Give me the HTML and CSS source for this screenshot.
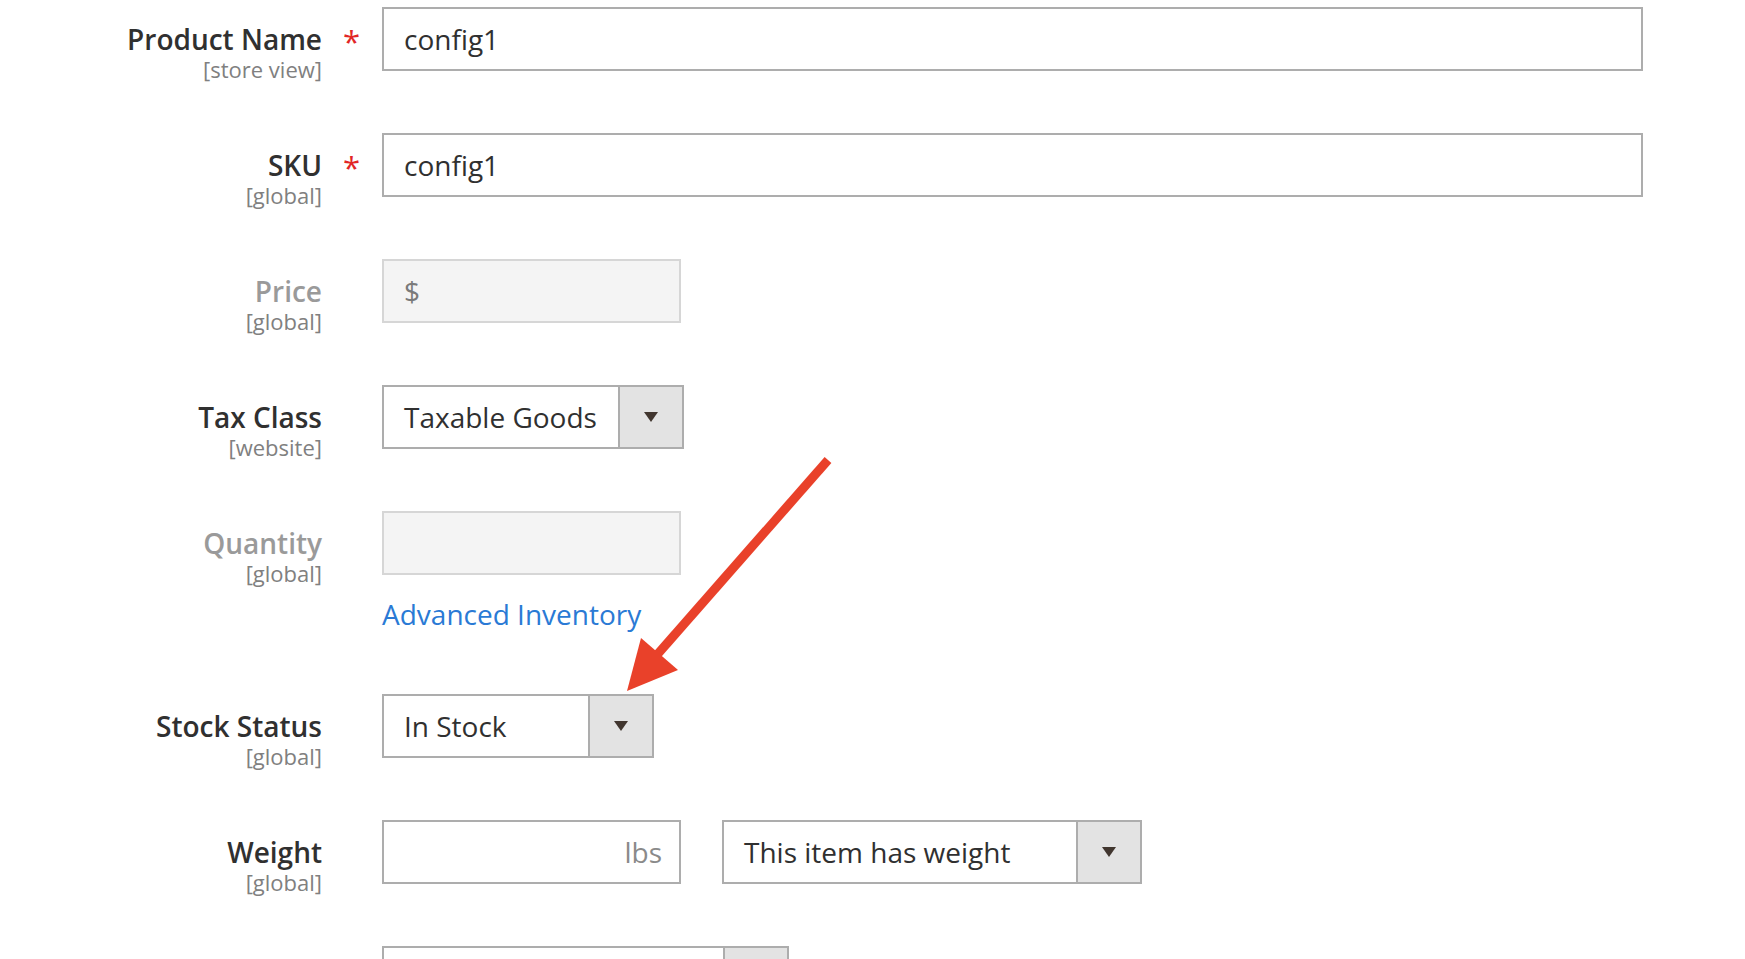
FILE: index.html
```html
<!DOCTYPE html>
<html lang="en">
<head>
    <meta charset="UTF-8">
    <title>New Product - General</title>
    <link rel="stylesheet" href="styles.css">
</head>
<body>
    <div class="page">
        <div class="form">
            <div class="field">
                <div class="field-label">
                    <span class="label-text">Product Name</span>
                    <span class="scope">[store view]</span>
                </div>
                <div class="field-req">*</div>
                <div class="field-control">
                    <div class="input">config1</div>
                </div>
            </div>

            <div class="field">
                <div class="field-label">
                    <span class="label-text">SKU</span>
                    <span class="scope">[global]</span>
                </div>
                <div class="field-req">*</div>
                <div class="field-control">
                    <div class="input">config1</div>
                </div>
            </div>

            <div class="field disabled">
                <div class="field-label">
                    <span class="label-text">Price</span>
                    <span class="scope">[global]</span>
                </div>
                <div class="field-req"></div>
                <div class="field-control">
                    <div class="input input-short">$</div>
                </div>
            </div>

            <div class="field">
                <div class="field-label">
                    <span class="label-text">Tax Class</span>
                    <span class="scope">[website]</span>
                </div>
                <div class="field-req"></div>
                <div class="field-control">
                    <div class="select select-tax">
                        <span class="select-value">Taxable Goods</span>
                        <span class="select-btn"><span class="caret"></span></span>
                    </div>
                </div>
            </div>

            <div class="field disabled">
                <div class="field-label">
                    <span class="label-text">Quantity</span>
                    <span class="scope">[global]</span>
                </div>
                <div class="field-req"></div>
                <div class="field-control">
                    <div class="input input-short"></div>
                    <a class="action-link" href="#">Advanced Inventory</a>
                </div>
            </div>

            <div class="field">
                <div class="field-label">
                    <span class="label-text">Stock Status</span>
                    <span class="scope">[global]</span>
                </div>
                <div class="field-req"></div>
                <div class="field-control">
                    <div class="select select-stock">
                        <span class="select-value">In Stock</span>
                        <span class="select-btn"><span class="caret"></span></span>
                    </div>
                </div>
            </div>

            <div class="field">
                <div class="field-label">
                    <span class="label-text">Weight</span>
                    <span class="scope">[global]</span>
                </div>
                <div class="field-req"></div>
                <div class="field-control row">
                    <div class="input input-short addon">lbs</div>
                    <div class="select select-weight">
                        <span class="select-value">This item has weight</span>
                        <span class="select-btn"><span class="caret"></span></span>
                    </div>
                </div>
            </div>

            <!-- next row starts at the fold -->
            <div class="field">
                <div class="field-label"></div>
                <div class="field-req"></div>
                <div class="field-control">
                    <div class="select select-visibility">
                        <span class="select-value"></span>
                        <span class="select-btn"><span class="caret"></span></span>
                    </div>
                </div>
            </div>
        </div>

        <!-- callout pointing at the stock status dropdown -->
        <svg class="callout" width="1745" height="959" viewBox="0 0 1745 959">
            <line x1="828" y1="460" x2="656" y2="656" stroke="#e9412a" stroke-width="9"/>
            <polygon points="627,691 641,638 678,670" fill="#e9412a"/>
        </svg>
    </div>
</body>
</html>
```

FILE: styles.css
```css
body {
    margin: 0;
    background: #ffffff;
    font-family: "Open Sans", "Liberation Sans", sans-serif;
    color: #303030;
}
.page {
    position: relative;
    height: 959px;
    overflow: hidden;
}
.form {
    padding: 7px 102px 0 0;
}
.field {
    display: flex;
    margin-bottom: 62px;
}
/* the scope note hangs below the label, so the row height follows the control */
.field-label {
    box-sizing: border-box;
    width: 322px;
    height: 64px;
    text-align: right;
    padding-top: 14px;
    white-space: nowrap;
}
.label-text {
    display: block;
    font-size: 28px;
    font-weight: 600;
    line-height: 36px;
}
.scope {
    display: block;
    font-size: 22px;
    line-height: 24px;
    color: #808080;
}
.field-req {
    width: 39px;
    padding: 16px 0 0 21px;
    font-size: 31px;
    font-weight: 500;
    line-height: 36px;
    color: #e22626;
}
.field-control {
    flex: 1;
}
.field-control.row {
    display: flex;
    gap: 41px;
}
.input {
    box-sizing: border-box;
    height: 64px;
    padding: 12px 20px;
    border: 2px solid #adadad;
    font-size: 28px;
    line-height: 36px;
    background: #ffffff;
}
.input-short {
    width: 299px;
}
.input.addon {
    text-align: right;
    padding-right: 17px;
    color: #8a8a8a;
}
.disabled .label-text {
    color: #9a9a9a;
}
.disabled .input {
    background: #f4f4f4;
    border-color: #d6d6d6;
    color: #7a7a7a;
}
.action-link {
    display: inline-block;
    margin-top: 21px;
    font-size: 28px;
    line-height: 36px;
    color: #2a7ad5;
    text-decoration: none;
}
.select {
    box-sizing: border-box;
    display: flex;
    height: 64px;
    border: 2px solid #adadad;
    background: #ffffff;
}
.select-value {
    flex: 1;
    padding: 12px 20px;
    font-size: 28px;
    line-height: 36px;
    white-space: nowrap;
}
.select-btn {
    box-sizing: border-box;
    width: 64px;
    display: flex;
    align-items: center;
    justify-content: center;
    background: #e3e3e3;
    border-left: 2px solid #adadad;
}
.caret {
    width: 0;
    height: 0;
    border-left: 7px solid transparent;
    border-right: 7px solid transparent;
    border-top: 10px solid #41362f;
}
.select-tax { width: 302px; }
.select-stock { width: 272px; }
.select-weight { width: 420px; }
.select-visibility { width: 407px; }
.callout {
    position: absolute;
    top: 0;
    left: 0;
    pointer-events: none;
}
```
